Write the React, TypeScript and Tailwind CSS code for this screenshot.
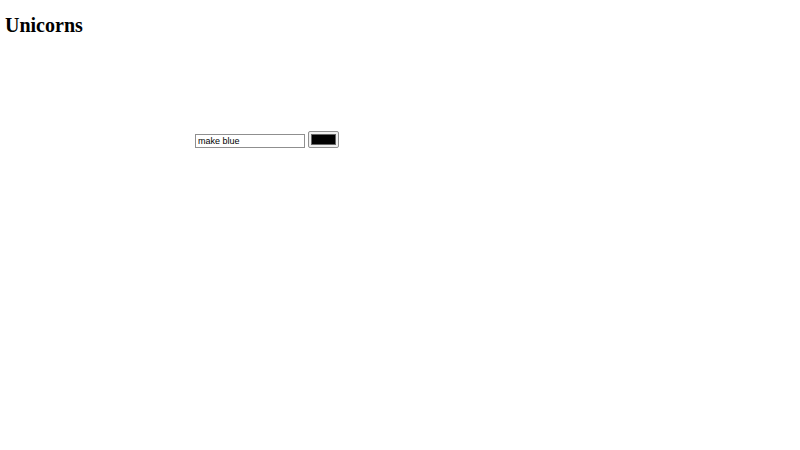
export default function App() {
  return (
    <div className="flex flex-col bg-white min-h-[450px]">
      <h1 className="ml-[5px] mt-[14px] text-[20px] leading-[23px] font-bold text-black font-['Liberation_Serif',serif]">
        Unicorns
      </h1>
      <div className="mt-[94px] ml-[195px] flex items-start gap-[3px]">
        <input
          type="text"
          defaultValue="make blue"
          className="mt-[3px] w-[110px] h-[14px] border border-[#8f8f8f] px-[2px] text-[9px] leading-[12px] text-black font-['Liberation_Sans',sans-serif] outline-none"
        />
        <div className="w-[31px] h-[17px] rounded-[2px] border border-[#8f8f8f] bg-[#efefef] p-[2px]">
          <div className="w-full h-full bg-black border border-[#666]" />
        </div>
      </div>
    </div>
  );
}
